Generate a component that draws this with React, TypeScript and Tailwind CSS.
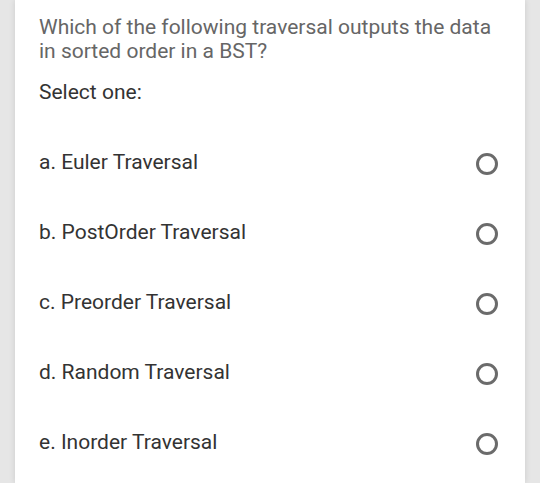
import React from "react";

const options = [
  "a. Euler Traversal",
  "b. PostOrder Traversal",
  "c. Preorder Traversal",
  "d. Random Traversal",
  "e. Inorder Traversal",
];

export default function App() {
  return (
    <div
      className="min-h-[483px] bg-[#e6e6e6] px-[15px]"
      style={{ fontFamily: "Roboto, 'Liberation Sans', sans-serif" }}
    >
      <div className="min-h-[483px] bg-white pl-[24px] pr-[27px] pt-[15px] shadow-[0_0_6px_rgba(0,0,0,0.12)]">
        <p className="text-[21px] leading-[24px] text-[#666666]">
          Which of the following traversal outputs the data in sorted order in a BST?
        </p>
        <p className="mt-[17px] text-[21px] leading-[24px] text-[#333333]">Select one:</p>
        <div className="mt-[24px] flex flex-col">
          {options.map((o) => (
            <div key={o} className="flex h-[70px] items-center justify-between">
              <span className="text-[21px] text-[#333333]">{o}</span>
              <span className="mt-[1px] h-[22px] w-[22px] rounded-full border-[3px] border-[#6b6b6b]" />
            </div>
          ))}
        </div>
      </div>
    </div>
  );
}
